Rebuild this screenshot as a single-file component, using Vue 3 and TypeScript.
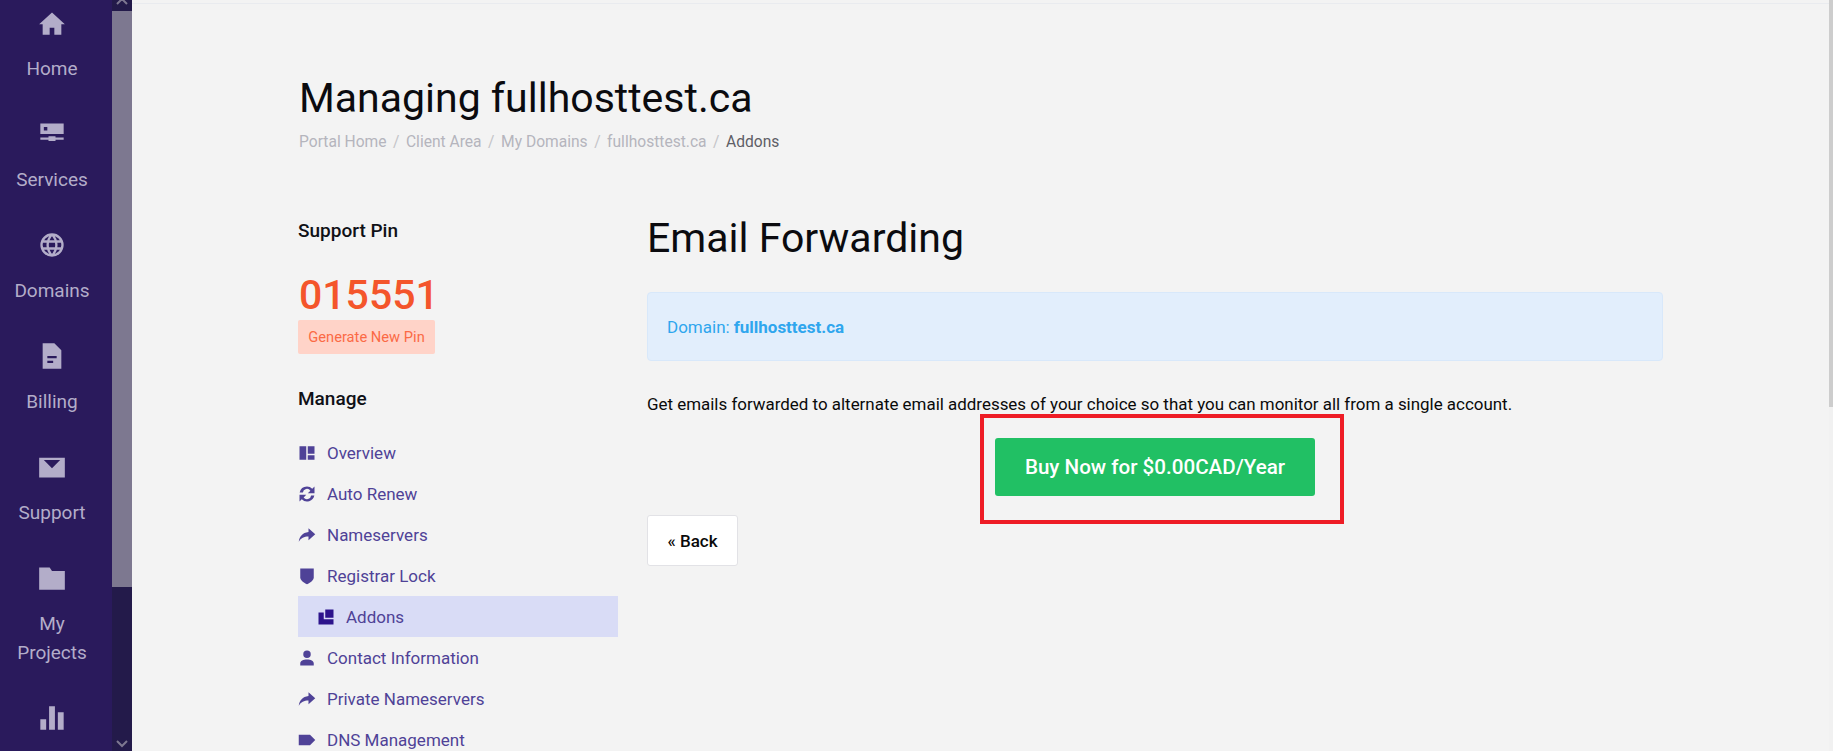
<script setup lang="ts">
interface NavItem { label: string; icon: string; line?: boolean }
const nav: NavItem[] = [
  { label: 'Home', icon: 'M12 3 1 13h3v9h6v-6h4v6h6v-9h3z' },
  { label: 'Services', icon: 'M2 3h20v9H2zM5 6v3h3V6zM2 15h7v-1h6v1h7v2h-7v1H9v-1H2z' },
  { label: 'Domains', icon: 'M12 3a9 9 0 1 0 0 18 9 9 0 0 0 0-18zM12 3c-5 5-5 13 0 18M12 3c5 5 5 13 0 18M3.500 9h17M3.500 15h17', line: true },
  { label: 'Billing', icon: 'M4 1h10l6 6v16H4zM8 12v2h8v-2zm0 4v2h5v-2z' },
  { label: 'Support', icon: 'M1 4h22v17H1zM5 6l7 7 7-7z' },
  { label: 'My Projects', icon: 'M1 3h9l2 3h11v16H1z' },
  { label: '', icon: 'M2 13h5v9H2zM9.500 2h5v20h-5zM17 7h5v15h-5z' },
];
interface ManageItem { label: string; icon: string; active?: boolean }
const manage: ManageItem[] = [
  { label: 'Overview', icon: 'M2 3h9v18H2zM13 3h9v10h-9zM13 15h9v6h-9z' },
  { label: 'Auto Renew', icon: 'M12 2a10 10 0 0 1 7 2.900L22 2v9h-9l3.500-3.500A5.500 5.500 0 0 0 6.500 10H2.200A10 10 0 0 1 12 2zM2 13h9l-3.500 3.500A5.500 5.500 0 0 0 17.500 14h4.300A10 10 0 0 1 5 19.100L2 22z' },
  { label: 'Nameservers', icon: 'M14 3l9 8-9 8v-5C8 14 4 16 1 21c1-7 5-12 13-13z' },
  { label: 'Registrar Lock', icon: 'M3 2h18v12c0 4-5 7-9 9-4-2-9-5-9-9z' },
  { label: 'Addons', icon: 'M2 6h7v9h13v7H2zM11 2h11v11H11z', active: true },
  { label: 'Contact Information', icon: 'M12 2a5 5 0 1 1 0 10 5 5 0 0 1 0-10zM3 22v-3c0-3 4-5 9-5s9 2 9 5v3z' },
  { label: 'Private Nameservers', icon: 'M14 3l9 8-9 8v-5C8 14 4 16 1 21c1-7 5-12 13-13z' },
  { label: 'DNS Management', icon: 'M1 5h15l7 7-7 7H1z' },
];
</script>

<template>
  <div class="page">
    <aside class="rail">
      <nav class="rail-nav">
        <a v-for="n in nav" :key="n.icon" class="rail-item">
          <svg class="rail-icon" :class="{ line: n.line }" viewBox="0 0 24 24"><path :d="n.icon" fill-rule="evenodd" /></svg>
          <span v-if="n.label" class="rail-label">{{ n.label }}</span>
        </a>
      </nav>
    </aside>
    <div class="rail-scroll">
      <div class="rail-arrow top">
        <svg viewBox="0 0 12 8" width="12" height="8"><path d="M1 7l5-5 5 5" /></svg>
      </div>
      <div class="rail-thumb"></div>
      <div class="rail-arrow bottom">
        <svg viewBox="0 0 12 8" width="12" height="8"><path d="M1 1l5 5 5-5" /></svg>
      </div>
    </div>

    <main class="main">
      <div class="content">
        <h1 class="title">Managing fullhosttest.ca</h1>
        <ol class="crumbs">
          <li>Portal Home</li><li class="sep">/</li>
          <li>Client Area</li><li class="sep">/</li>
          <li>My Domains</li><li class="sep">/</li>
          <li>fullhosttest.ca</li><li class="sep">/</li>
          <li class="current">Addons</li>
        </ol>
        <div class="cols">
          <section class="side">
            <h3 class="side-title">Support Pin</h3>
            <div class="pin">015551</div>
            <button class="pin-btn">Generate New Pin</button>
            <h3 class="side-title manage-title">Manage</h3>
            <ul class="menu">
              <li v-for="m in manage" :key="m.label" class="menu-item" :class="{ active: m.active }">
                <svg class="menu-icon" viewBox="0 0 24 24"><path :d="m.icon" fill-rule="evenodd" /></svg>
                <span>{{ m.label }}</span>
              </li>
            </ul>
          </section>
          <section class="body">
            <h2 class="heading">Email Forwarding</h2>
            <div class="alert">Domain: <strong>fullhosttest.ca</strong></div>
            <p class="desc">Get emails forwarded to alternate email addresses of your choice so that you can monitor all from a single account.</p>
            <div class="buy-row">
              <button class="buy">Buy Now for $0.00CAD/Year</button>
              <div class="mark"></div>
            </div>
            <button class="back">« Back</button>
          </section>
        </div>
      </div>
    </main>

    <div class="page-scroll"><div class="page-thumb"></div></div>
  </div>
</template>

<style>
html, body { margin: 0; height: 100%; overflow: hidden; }
</style>

<style scoped>
.page {
  display: flex;
  width: 1833px;
  height: 751px;
  overflow: hidden;
  background: #f3f3f3;
  font-family: Roboto, "Liberation Sans", sans-serif;
}
.rail {
  width: 112px;
  flex: none;
  box-sizing: border-box;
  padding-right: 8px;
  background: #2a1a5c;
  overflow: hidden;
}
.rail-nav {
  display: flex;
  flex-direction: column;
  padding-top: 9px;
}
.rail-item {
  display: flex;
  flex-direction: column;
  align-items: center;
  padding-bottom: 37px;
  color: #b3adc9;
}
.rail-icon {
  width: 28px;
  height: 28px;
  fill: #b3adc9;
  flex: none;
}
.rail-icon.line {
  fill: none;
  stroke: #b3adc9;
  stroke-width: 2;
}
.rail-label {
  margin-top: 17px;
  width: 90px;
  text-align: center;
  font-size: 19px;
  line-height: 29px;
}
.rail-scroll {
  width: 20px;
  flex: none;
  background: #231a4a;
  display: flex;
  flex-direction: column;
}
.rail-arrow {
  height: 11px;
  display: flex;
  align-items: flex-start;
  justify-content: center;
  overflow: hidden;
  background: #231a4a;
}
.rail-arrow.top svg { margin-top: -3px; }
.rail-arrow svg { flex: none; fill: none; stroke: #7d7790; stroke-width: 2; }
.rail-arrow.bottom { margin-top: auto; height: 15px; align-items: center; }
.rail-thumb {
  height: 576px;
  background: #7d7890;
}
.main {
  flex: 1;
  min-width: 0;
  border-top: 1px solid #e9ebef;
  margin-top: 3px;
}
.content {
  padding: 0 166px 0 166px;
}
.title {
  margin: 70px 0 0 1px;
  font-size: 41px;
  line-height: 48px;
  font-weight: 400;
  color: #0b0b0f;
}
.crumbs {
  display: flex;
  list-style: none;
  margin: 9px 0 0 1px;
  padding: 0;
  font-size: 15.600px;
  line-height: 22px;
  color: #b5b5bd;
}
.crumbs .sep { margin: 0 6.500px; color: #c4c4c8; }
.crumbs .current { color: #5e5e66; }
.cols {
  display: flex;
  gap: 29px;
  margin-top: 61px;
}
.side { width: 320px; flex: none; padding-top: 5px; }
.side-title {
  margin: 0;
  font-size: 19px;
  line-height: 24px;
  font-weight: 500;
  color: #0f1016;
}
.pin {
  margin: 27px 0 0 1px;
  font-size: 41px;
  line-height: 50px;
  font-weight: 500;
  color: #f4552b;
}
.pin-btn {
  display: block;
  width: 137px;
  height: 34px;
  padding: 0;
  border: 0;
  border-radius: 2px;
  background: #ffd3c8;
  color: #fb6a45;
  font-family: inherit;
  font-size: 14.700px;
}
.manage-title { margin-top: 33px; }
.menu {
  list-style: none;
  margin: 21px 0 0;
  padding: 0;
}
.menu-item {
  display: flex;
  align-items: center;
  height: 41px;
  font-size: 17px;
  color: #4f4297;
}
.menu-icon {
  width: 18px;
  height: 18px;
  fill: #4f4297;
  margin-right: 11px;
  flex: none;
}
.menu-item.active {
  background: #d9dcf6;
  padding-left: 19px;
}
.menu-item.active .menu-icon { fill: #2d148c; }
.body { flex: 1; min-width: 0; }
.heading {
  margin: 0;
  font-size: 41px;
  line-height: 48px;
  font-weight: 400;
  color: #0b0b0f;
}
.alert {
  margin-top: 30px;
  height: 69px;
  box-sizing: border-box;
  padding-left: 19px;
  display: flex;
  align-items: center;
  gap: 4px;
  background: #e2eefc;
  border: 1px solid #d8e8fa;
  border-radius: 4px;
  color: #2fa6ee;
  font-size: 17px;
}
.alert strong { font-weight: 700; }
.desc {
  margin: 31px 0 0;
  font-size: 16.930px;
  line-height: 24px;
  color: #0a0a0a;
}
.buy-row {
  position: relative;
  display: flex;
  justify-content: center;
  margin-top: 22px;
}
.buy {
  width: 320px;
  height: 58px;
  border: 0;
  border-radius: 3px;
  background: #21c064;
  color: #fff;
  font-family: inherit;
  font-size: 20.600px;
  font-weight: 500;
}
.mark {
  position: absolute;
  left: calc(50% - 175px);
  top: -24px;
  width: 364px;
  height: 110px;
  box-sizing: border-box;
  border: 4px solid #ee1c25;
  pointer-events: none;
}
.back {
  display: block;
  margin-top: 19px;
  width: 91px;
  height: 51px;
  background: #fff;
  border: 1px solid #e2e2e6;
  border-radius: 3px;
  color: #0a0a0a;
  font-family: inherit;
  font-size: 17px;
  font-weight: 500;
}
.page-scroll {
  width: 4px;
  flex: none;
  background: #f1f1f1;
}
.page-thumb {
  height: 407px;
  background: #cdcdcd;
}
</style>
